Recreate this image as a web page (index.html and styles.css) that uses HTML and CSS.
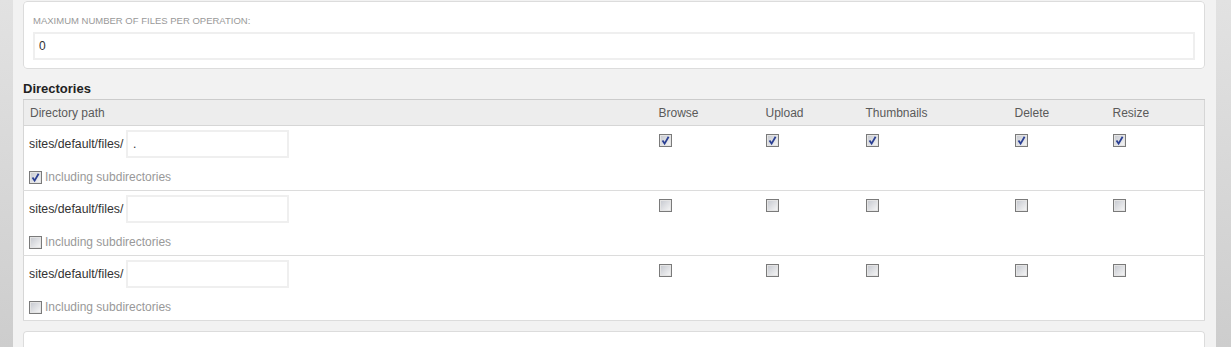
FILE: index.html
```html
<!DOCTYPE html>
<html lang="en">

<head>
    <meta charset="UTF-8">
    <title>File browser settings</title>
    <link rel="stylesheet" href="styles.css">
</head>

<body>
    <div class="side side-left"></div>
    <main class="content">
        <fieldset class="box">
            <label class="field-label" for="max-files">Maximum number of files per operation:</label>
            <input class="field-input" id="max-files" type="text" value="0">
        </fieldset>

        <h3 class="heading">Directories</h3>
        <table class="dirs">
            <colgroup>
                <col class="col-path">
                <col class="col-browse">
                <col class="col-upload">
                <col class="col-thumbs">
                <col class="col-delete">
                <col>
            </colgroup>
            <thead>
                <tr>
                    <th>Directory path</th>
                    <th>Browse</th>
                    <th>Upload</th>
                    <th>Thumbnails</th>
                    <th>Delete</th>
                    <th>Resize</th>
                </tr>
            </thead>
            <tbody>
                <tr>
                    <td class="path-cell">
                        <div class="path">
                            <span class="prefix">sites/default/files/</span>
                            <input class="path-input" type="text" value=".">
                        </div>
                        <label class="sub"><span class="box-check checked"><svg viewBox="0 0 11 11"><path d="M2.5 5.5 L4.6 8.6 L8.6 1.8" /></svg></span>Including subdirectories</label>
                    </td>
                    <td><span class="box-check checked"><svg viewBox="0 0 11 11"><path d="M2.5 5.5 L4.6 8.6 L8.6 1.8" /></svg></span></td>
                    <td><span class="box-check checked"><svg viewBox="0 0 11 11"><path d="M2.5 5.5 L4.6 8.6 L8.6 1.8" /></svg></span></td>
                    <td><span class="box-check checked"><svg viewBox="0 0 11 11"><path d="M2.5 5.5 L4.6 8.6 L8.6 1.8" /></svg></span></td>
                    <td><span class="box-check checked"><svg viewBox="0 0 11 11"><path d="M2.5 5.5 L4.6 8.6 L8.6 1.8" /></svg></span></td>
                    <td><span class="box-check checked"><svg viewBox="0 0 11 11"><path d="M2.5 5.5 L4.6 8.6 L8.6 1.8" /></svg></span></td>
                </tr>
                <tr>
                    <td class="path-cell">
                        <div class="path">
                            <span class="prefix">sites/default/files/</span>
                            <input class="path-input" type="text" value="">
                        </div>
                        <label class="sub"><span class="box-check"></span>Including subdirectories</label>
                    </td>
                    <td><span class="box-check"></span></td>
                    <td><span class="box-check"></span></td>
                    <td><span class="box-check"></span></td>
                    <td><span class="box-check"></span></td>
                    <td><span class="box-check"></span></td>
                </tr>
                <tr>
                    <td class="path-cell">
                        <div class="path">
                            <span class="prefix">sites/default/files/</span>
                            <input class="path-input" type="text" value="">
                        </div>
                        <label class="sub"><span class="box-check"></span>Including subdirectories</label>
                    </td>
                    <td><span class="box-check"></span></td>
                    <td><span class="box-check"></span></td>
                    <td><span class="box-check"></span></td>
                    <td><span class="box-check"></span></td>
                    <td><span class="box-check"></span></td>
                </tr>
            </tbody>
        </table>

        <fieldset class="box box-next"></fieldset>
    </main>
    <div class="side side-right"></div>
</body>

</html>
```

FILE: styles.css
```css
* {
    box-sizing: border-box;
}

html,
body {
    height: 100%;
}

body {
    margin: 0;
    display: flex;
    overflow: hidden;
    font-family: "Liberation Sans", Arial, sans-serif;
    font-size: 12px;
    color: #333;
    background-color: #f2f2f2;
}

.side {
    flex: none;
    background: linear-gradient(#e2e2e2, #cdcdcd);
}

.side-left {
    width: 13px;
}

.side-right {
    width: 15px;
}

.content {
    flex: 1;
    padding: 1px 11px 0 10px;
    background-color: #f2f2f2;
}

.box {
    margin: 0;
    padding: 12px 9px 8px 9px;
    border: 1px solid #dcdcdc;
    border-radius: 4px;
    background-color: #fff;
}

.field-label {
    display: block;
    margin-bottom: 4px;
    font-size: 9.5px;
    line-height: 14px;
    text-transform: uppercase;
    color: #999;
}

.field-input {
    display: block;
    width: 100%;
    height: 28px;
    margin: 0;
    padding: 0 4px;
    border: 2px solid #efefef;
    font-family: inherit;
    font-size: 12px;
    color: #333;
    outline: none;
}

.heading {
    margin: 12px 0 2px;
    font-size: 13px;
    line-height: 16px;
    font-weight: bold;
    color: #222;
}

.dirs {
    width: 100%;
    table-layout: fixed;
    border-collapse: collapse;
    background-color: #fff;
    border: 1px solid #d6d6d6;
}

.col-path {
    width: 628px;
}

.col-browse {
    width: 107px;
}

.col-upload {
    width: 100px;
}

.col-thumbs {
    width: 149px;
}

.col-delete {
    width: 98px;
}

.dirs th {
    height: 26px;
    padding: 0 7px;
    border-top: 1px solid #ccc;
    border-bottom: 1px solid #d6d6d6;
    background-color: #ededed;
    font-weight: normal;
    text-align: left;
    color: #5a5a5a;
}

.dirs th:first-child {
    padding-left: 6px;
}

.dirs td {
    height: 65px;
    padding: 8px 7px 0;
    vertical-align: top;
    border-bottom: 1px solid #dcdcdc;
}

.dirs td.path-cell {
    padding: 4px 5px 0;
}

.path {
    display: flex;
    align-items: center;
}

.prefix {
    width: 97px;
    flex: none;
    font-size: 12.3px;
}

.path-input {
    width: 163px;
    height: 28px;
    margin: 0;
    padding: 0 5px;
    border: 2px solid #efefef;
    font-family: inherit;
    font-size: 12px;
    color: #333;
    outline: none;
}

.sub {
    display: flex;
    align-items: center;
    gap: 3px;
    margin-top: 12px;
    color: #999;
    line-height: 14px;
}

.box-check {
    display: block;
    width: 13px;
    height: 13px;
    border: 1px solid #7a7a7a;
    background: linear-gradient(135deg, #c4c7ce, #f8f8f8);
    box-shadow: inset 0 0 0 1px #e4e4e4;
}

.box-check svg {
    display: block;
    width: 11px;
    height: 11px;
    fill: none;
    stroke: #2a3f93;
    stroke-width: 1.8;
}

.box-next {
    margin-top: 10px;
    height: 16px;
    border-bottom: 0;
    border-radius: 4px 4px 0 0;
}
```
